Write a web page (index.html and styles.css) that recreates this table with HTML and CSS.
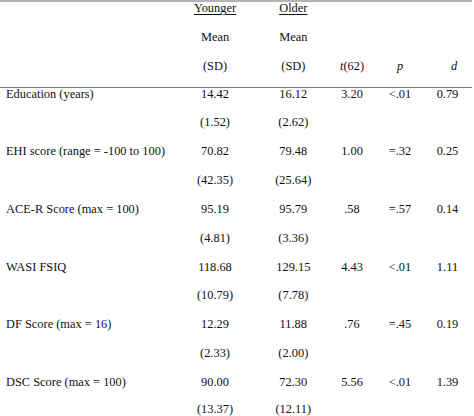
FILE: index.html
```html
<!DOCTYPE html>
<html lang="en">
<head>
<meta charset="utf-8">
<title>Table</title>
<link rel="stylesheet" href="styles.css">
</head>
<body>
<div class="table">
  <div class="head">
    <div class="row">
      <div class="label"></div>
      <div class="cell"><span class="ul">Younger</span></div>
      <div class="cell"><span class="ul">Older</span></div>
      <div class="cell"></div><div class="cell"></div><div class="cell"></div>
    </div>
    <div class="row">
      <div class="label"></div>
      <div class="cell">Mean</div>
      <div class="cell">Mean</div>
      <div class="cell"></div><div class="cell"></div><div class="cell"></div>
    </div>
    <div class="row last">
      <div class="label"></div>
      <div class="cell">(SD)</div>
      <div class="cell">(SD)</div>
      <div class="cell"><i>t</i>(62)</div>
      <div class="cell"><i>p</i></div>
      <div class="cell d-head"><i>d</i></div>
    </div>
  </div>
  <div class="body">
    <div class="row"><div class="label">Education (years)</div><div class="cell">14.42</div><div class="cell">16.12</div><div class="cell">3.20</div><div class="cell">&lt;.01</div><div class="cell">0.79</div></div>
    <div class="row"><div class="label"></div><div class="cell">(1.52)</div><div class="cell">(2.62)</div><div class="cell"></div><div class="cell"></div><div class="cell"></div></div>
    <div class="row"><div class="label">EHI score (range = -100 to 100)</div><div class="cell">70.82</div><div class="cell">79.48</div><div class="cell">1.00</div><div class="cell">=.32</div><div class="cell">0.25</div></div>
    <div class="row"><div class="label"></div><div class="cell">(42.35)</div><div class="cell">(25.64)</div><div class="cell"></div><div class="cell"></div><div class="cell"></div></div>
    <div class="row"><div class="label">ACE-R Score (max = 100)</div><div class="cell">95.19</div><div class="cell">95.79</div><div class="cell">.58</div><div class="cell">=.57</div><div class="cell">0.14</div></div>
    <div class="row"><div class="label"></div><div class="cell">(4.81)</div><div class="cell">(3.36)</div><div class="cell"></div><div class="cell"></div><div class="cell"></div></div>
    <div class="row"><div class="label">WASI FSIQ</div><div class="cell">118.68</div><div class="cell">129.15</div><div class="cell">4.43</div><div class="cell">&lt;.01</div><div class="cell">1.11</div></div>
    <div class="row"><div class="label"></div><div class="cell">(10.79)</div><div class="cell">(7.78)</div><div class="cell"></div><div class="cell"></div><div class="cell"></div></div>
    <div class="row"><div class="label">DF Score (max = 16)</div><div class="cell">12.29</div><div class="cell">11.88</div><div class="cell">.76</div><div class="cell">=.45</div><div class="cell">0.19</div></div>
    <div class="row"><div class="label"></div><div class="cell">(2.33)</div><div class="cell">(2.00)</div><div class="cell"></div><div class="cell"></div><div class="cell"></div></div>
    <div class="row"><div class="label">DSC Score (max = 100)</div><div class="cell">90.00</div><div class="cell">72.30</div><div class="cell">5.56</div><div class="cell">&lt;.01</div><div class="cell">1.39</div></div>
    <div class="row final"><div class="label"></div><div class="cell">(13.37)</div><div class="cell">(12.11)</div><div class="cell"></div><div class="cell"></div><div class="cell"></div></div>
  </div>
</div>
</body>
</html>
```
FILE: styles.css
```css
html, body {
  margin: 0;
  padding: 0;
  background: #ffffff;
}
body {
  font-family: "Liberation Serif", "Times New Roman", serif;
  font-size: 12.4px;
  color: #111111;
  overflow: hidden;
}
.table {
  width: 472px;
  border-top: 2px solid #b4b4b4;
}
.row {
  display: grid;
  grid-template-columns: 172px 86px 70.6px 46.8px 49.2px 45.8px;
  line-height: 12px;
  padding-bottom: 16.85px;
  white-space: nowrap;
}
.row.last {
  padding-bottom: 14.85px;
  border-bottom: 1px solid #7a7a7a;
}
.row.final {
  margin-top: -2px;
}
.label {
  padding-left: 6px;
  text-align: left;
}
.cell {
  text-align: center;
}
.ul {
  text-decoration: underline;
  text-underline-offset: 2px;
}
.d-head {
  padding-left: 13px;
}
```
